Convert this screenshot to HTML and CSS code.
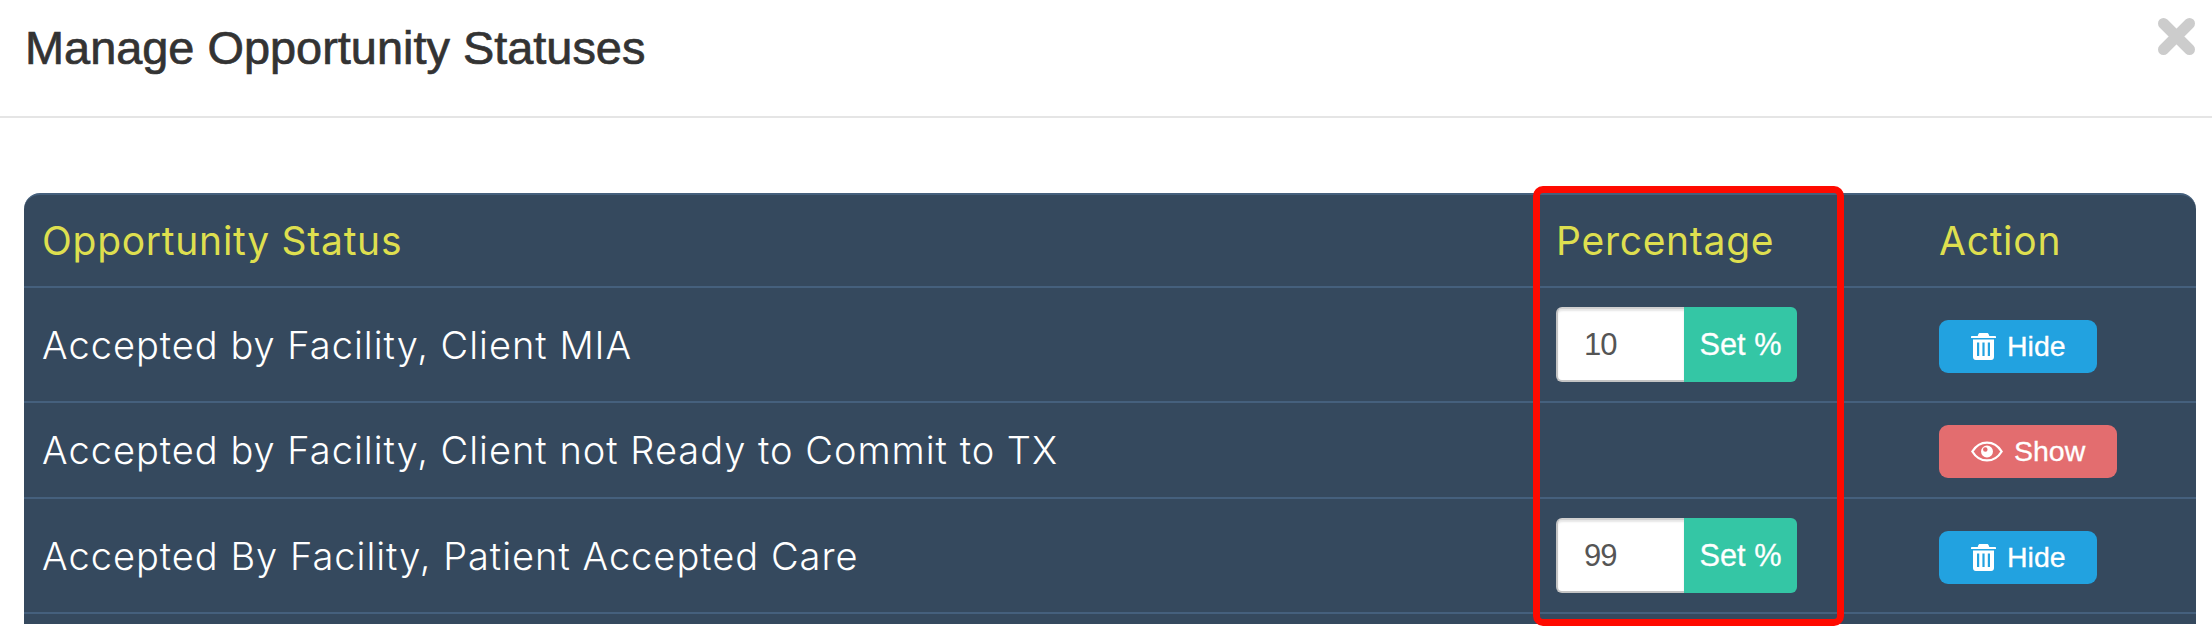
FILE: index.html
```html
<!DOCTYPE html>
<html lang="en">
<head>
<meta charset="utf-8">
<title>Manage Opportunity Statuses</title>
<link rel="stylesheet" href="styles.css">
</head>
<body>
<div class="modal">
  <header class="modal-header">
    <h4 class="modal-title">Manage Opportunity Statuses</h4>
    <button class="close" type="button" aria-label="Close">
      <svg viewBox="0 0 37 37" width="37" height="37"><path d="M5.5 5.5 31.5 31.5M31.5 5.5 5.5 31.5" fill="none" stroke="#cccccc" stroke-width="11" stroke-linecap="round"/></svg>
    </button>
  </header>
  <main class="modal-body">
    <div class="table-wrap">
      <table class="status-table">
        <colgroup><col class="col-status"><col class="col-percent"><col class="col-action"></colgroup>
        <thead>
          <tr><th>Opportunity Status</th><th>Percentage</th><th>Action</th></tr>
        </thead>
        <tbody>
          <tr>
            <td>Accepted by Facility, Client MIA</td>
            <td><div class="set-group"><input class="set-input" type="text" value="10"><button class="btn btn-set" type="button">Set %</button></div></td>
            <td><button class="btn btn-act btn-hide" type="button"><svg class="icon-trash" viewBox="0 0 25 27" width="25" height="27"><path fill="#fff" fill-rule="evenodd" d="M9 0h7c1 0 1.600.6 1.800 1.500L18.300 3H24c.6 0 1 .4 1 1v1H0V4c0-.6.4-1 1-1h5.700l.5-1.500C7.400.6 8 0 9 0ZM2 6.500h21V24c0 1.800-1.200 3-2.800 3H4.800C3.200 27 2 25.800 2 24ZM6 9.500v13.500h2.200V9.500ZM11.400 9.500v13.500h2.200V9.500ZM16.800 9.500v13.500H19V9.500Z"/></svg>Hide</button></td>
          </tr>
          <tr>
            <td>Accepted by Facility, Client not Ready to Commit to TX</td>
            <td></td>
            <td><button class="btn btn-act btn-show" type="button"><svg class="icon-eye" viewBox="0 0 31 20" width="32" height="21"><path d="M1.300 10C4.500 4.700 9.700 1.300 15.500 1.300S26.500 4.700 29.700 10C26.500 15.300 21.300 18.700 15.500 18.700S4.500 15.300 1.300 10Z" fill="none" stroke="#fff" stroke-width="2.200"/><path fill="#fff" fill-rule="evenodd" d="M15.500 4.200a5.800 5.800 0 1 1 0 11.600 5.800 5.800 0 0 1 0-11.600ZM13.800 5.800a2.200 2.200 0 1 0 .1 4.400 2.200 2.200 0 0 0-.1-4.400Z"/></svg>Show</button></td>
          </tr>
          <tr>
            <td>Accepted By Facility, Patient Accepted Care</td>
            <td><div class="set-group"><input class="set-input" type="text" value="99"><button class="btn btn-set" type="button">Set %</button></div></td>
            <td><button class="btn btn-act btn-hide" type="button"><svg class="icon-trash" viewBox="0 0 25 27" width="25" height="27"><path fill="#fff" fill-rule="evenodd" d="M9 0h7c1 0 1.600.6 1.800 1.500L18.300 3H24c.6 0 1 .4 1 1v1H0V4c0-.6.4-1 1-1h5.700l.5-1.500C7.400.6 8 0 9 0ZM2 6.500h21V24c0 1.800-1.200 3-2.800 3H4.800C3.200 27 2 25.800 2 24ZM6 9.500v13.500h2.200V9.500ZM11.400 9.500v13.500h2.200V9.500ZM16.800 9.500v13.500H19V9.500Z"/></svg>Hide</button></td>
          </tr>
          <tr class="row-cut"><td></td><td></td><td></td></tr>
        </tbody>
      </table>
    </div>
    <div class="highlight" aria-hidden="true"></div>
  </main>
</div>
</body>
</html>
```

FILE: styles.css
```css
* { box-sizing: border-box; }
html, body { margin: 0; padding: 0; background: #fff; }
body { width: 2212px; height: 626px; overflow: hidden; font-family: "Liberation Sans", Arial, sans-serif; }

.modal { position: relative; width: 100%; height: 100%; }

.modal-header {
  display: flex;
  justify-content: space-between;
  align-items: flex-start;
  height: 118px;
  padding: 18px 17px 0 25px;
  border-bottom: 2px solid #e5e5e5;
}
.modal-title {
  margin: 0;
  padding-top: 3px;
  font-size: 46.900px;
  line-height: 54px;
  font-weight: 400;
  color: #333;
  -webkit-text-stroke: 0.7px #333;
}
.close { display: block; width: 37px; height: 37px; padding: 0; border: 0; background: none; }
.close svg { display: block; }

.modal-body { padding: 75px 16px 0 24px; }

.table-wrap {
  background: #35495e;
  border-top: 2px solid #45607d;
  border-radius: 16px 16px 0 0;
  overflow: hidden;
  height: 431px;
}
.status-table { width: 2172px; table-layout: fixed; border-collapse: separate; border-spacing: 0; font-family: Inter, "Liberation Sans", sans-serif; }
.col-status { width: 1514px; }
.col-percent { width: 383px; }
.col-action { width: 275px; }

.status-table th {
  height: 93px;
  padding: 0 18px;
  text-align: left;
  font-size: 39px;
  font-weight: 400;
  letter-spacing: 0.72px;
  color: #dedf4f;
  border-bottom: 2px solid #45607d;
}
.status-table td {
  padding: 19px 18px;
  font-size: 38px;
  font-weight: 300;
  letter-spacing: 1px;
  color: #fff;
  vertical-align: middle;
  border-bottom: 2px solid #45607d;
}
.status-table .row-cut td { padding: 0; height: 10px; border: 0; }

.set-group { display: flex; width: 241px; height: 75px; }
.set-input {
  width: 128px;
  height: 75px;
  padding: 0 0 0 26px;
  border: 2px solid #c4c4c4;
  border-top-color: #d0d0d0;
  border-right: 0;
  border-radius: 6px 0 0 6px;
  box-shadow: inset 0 2px 2px rgba(0,0,0,.1);
  background: #fff;
  color: #555;
  font-family: "Liberation Sans", Arial, sans-serif;
  font-size: 31px;
  letter-spacing: -1px;
  outline: none;
}
.btn { border: 0; color: #fff; font-family: "Liberation Sans", Arial, sans-serif; letter-spacing: 0; -webkit-text-stroke: 0.3px #fff; }
.btn-set {
  width: 113px;
  height: 75px;
  padding: 0;
  background: #34c6a5;
  border-radius: 0 6px 6px 0;
  font-size: 30.700px;
}
.btn-act {
  display: flex;
  align-items: center;
  height: 53px;
  margin-top: 3px;
  padding: 0 0 0 32px;
  border-radius: 9px;
  font-size: 28.500px;
}
.btn-hide { width: 158px; background: #22a2e0; }
.btn-show { width: 178px; background: #e36d6f; }
.icon-trash { margin-right: 11px; flex: none; }
.icon-eye { margin-right: 11px; flex: none; }

.highlight {
  position: absolute;
  left: 1533px;
  top: 186px;
  width: 311px;
  height: 440px;
  border: 7px solid #ff0a00;
  border-radius: 10px;
  pointer-events: none;
}
```
